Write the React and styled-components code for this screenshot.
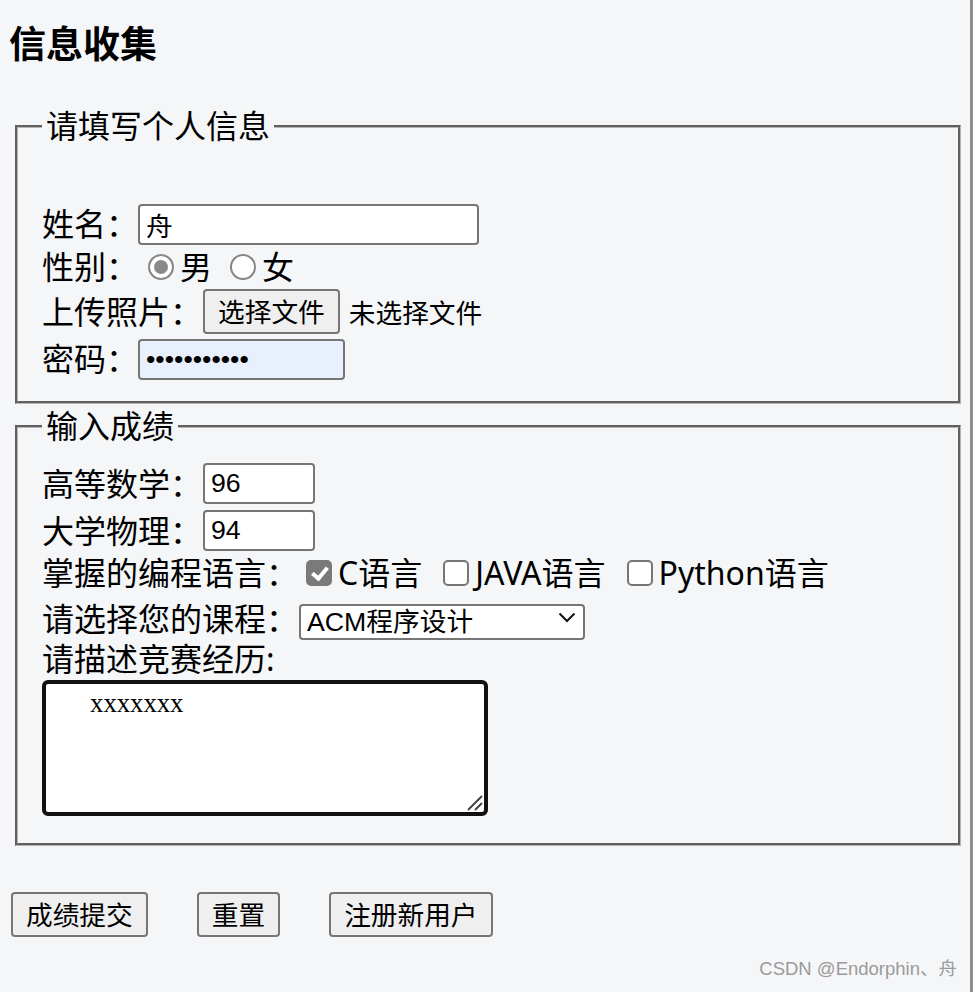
import React from 'react';
import styled, { createGlobalStyle } from 'styled-components';

const GlobalStyle = createGlobalStyle`
  html, body {
    margin: 0;
    padding: 0;
    background: #f5f6f8;
  }
  body {
    font-family: "Noto Sans", "Noto Sans CJK SC", sans-serif;
    color: #000;
  }
`;

const Page = styled.div`
  position: relative;
  box-sizing: border-box;
  min-height: 100vh;
  padding: 22px 9px 1px 10px;
  border-right: 3px solid #8c8c8c;
`;

const Title = styled.h3`
  margin: 0 0 0 -1px;
  font-size: 37px;
  line-height: 44px;
  font-weight: 700;
`;

const Group = styled.fieldset`
  margin: ${p => p.$top}px 0 0 5px;
  padding: 0 24px ${p => p.$bottom}px 24px;
  border: 3px groove #b4b4b4;
  min-width: 0;
`;

const Legend = styled.legend`
  padding: 0 4px;
  font-size: 32px;
  line-height: 40px;
`;

const Row = styled.div`
  display: flex;
  align-items: center;
  height: ${p => p.$h}px;
  margin-top: ${p => p.$mt || 0}px;
  font-size: 32px;
  line-height: 40px;
  white-space: nowrap;
`;

const Label = styled.span`
  margin-right: ${p => p.$gap || 0}px;
`;

const TextInput = styled.input`
  box-sizing: border-box;
  width: ${p => p.$w}px;
  height: 41px;
  margin: 0;
  padding: 0 6px;
  border: 2px solid #767676;
  border-radius: 4px;
  background: ${p => (p.$filled ? '#e8f0fe' : '#fff')};
  font: 26.7px "Liberation Sans", "Noto Sans CJK SC", sans-serif;
  color: #000;
  outline: none;
`;

const Choice = styled.label`
  display: inline-flex;
  align-items: center;
  margin-right: ${p => p.$gap || 0}px;
`;

const Radio = styled.input`
  appearance: none;
  box-sizing: border-box;
  width: 26px;
  height: 26px;
  margin: 0 6px 0 10px;
  border: 2px solid #858585;
  border-radius: 50%;
  background: #fff;

  &:checked {
    border-color: #8a8a8a;
    background: #8a8a8a;
    box-shadow: inset 0 0 0 4px #fff;
  }
`;

const Check = styled.input`
  appearance: none;
  position: relative;
  box-sizing: border-box;
  width: 26px;
  height: 26px;
  margin: 0 6px 0 8px;
  border: 2px solid #767676;
  border-radius: 5px;
  background: #fff;

  &:checked {
    border-color: #7a7a7a;
    background: #7a7a7a;
  }

  &:checked::after {
    content: '';
    position: absolute;
    left: 7px;
    top: 2px;
    width: 6px;
    height: 12px;
    border: solid #fff;
    border-width: 0 4px 4px 0;
    transform: rotate(40deg);
  }
`;

const Button = styled.button`
  box-sizing: border-box;
  height: 45px;
  margin: 0 ${p => p.$gap || 0}px 0 ${p => p.$left || 0}px;
  padding: 0 13px;
  border: 2px solid #767676;
  border-radius: 4px;
  background: #efefef;
  color: #000;
  font: 26.7px "Noto Sans CJK SC", sans-serif;
  line-height: 1;
`;

const FileNote = styled.span`
  margin-left: 9px;
  font: 26.7px "Noto Sans CJK SC", sans-serif;
`;

const SelectWrap = styled.span`
  position: relative;
  display: inline-block;
  margin-left: 1px;
`;

const Select = styled.select`
  box-sizing: border-box;
  appearance: none;
  width: 286px;
  height: 36px;
  margin: 0;
  padding: 0 0 0 6px;
  border: 2px solid #767676;
  border-radius: 4px;
  background: #fff;
  color: #000;
  font: 26.7px "Liberation Sans", "Noto Sans CJK SC", sans-serif;
  outline: none;
`;

const Chevron = styled.svg`
  position: absolute;
  right: 9px;
  top: 13px;
  pointer-events: none;
`;

const NotesWrap = styled.div`
  position: relative;
  width: 446px;
`;

const Notes = styled.textarea`
  display: block;
  box-sizing: border-box;
  width: 446px;
  height: 136px;
  margin: 0;
  padding: 4px;
  border: 4px solid #111;
  border-radius: 6px;
  background: #fff;
  color: #000;
  font: 26.7px "Liberation Serif", serif;
  outline: none;
  resize: none;
`;

const Grip = styled.svg`
  position: absolute;
  right: 5px;
  bottom: 5px;
  pointer-events: none;
`;

const Actions = styled.div`
  display: flex;
  margin-top: 46px;
  margin-left: 1px;
`;

const Watermark = styled.div`
  position: absolute;
  right: 13px;
  bottom: 12px;
  font: 18.5px/22px "Liberation Sans", "Noto Sans CJK SC", sans-serif;
  color: #9a9a9a;
`;

const languages = [
  { name: 'C语言', checked: true },
  { name: 'JAVA语言', checked: false },
  { name: 'Python语言', checked: false },
];

export default function App() {
  return (
    <Page>
      <GlobalStyle />
      <Title>信息收集</Title>

      <Group $top={40} $bottom={18}>
        <Legend>请填写个人信息</Legend>
        <Row $h={44} $mt={56}>
          <Label>姓名：</Label>
          <TextInput type="text" defaultValue="舟" $w={341} />
        </Row>
        <Row $h={42}>
          <Label>性别：</Label>
          <Choice $gap={8}>
            <Radio type="radio" name="sex" defaultChecked />男
          </Choice>
          <Choice>
            <Radio type="radio" name="sex" />女
          </Choice>
        </Row>
        <Row $h={47}>
          <Label>上传照片：</Label>
          <Button type="button" $left={1}>选择文件</Button>
          <FileNote>未选择文件</FileNote>
        </Row>
        <Row $h={48}>
          <Label>密码：</Label>
          <TextInput type="password" defaultValue="12345678901" $w={207} $filled />
        </Row>
      </Group>

      <Group $top={2} $bottom={27}>
        <Legend>输入成绩</Legend>
        <Row $h={41} $mt={17}>
          <Label $gap={1}>高等数学：</Label>
          <TextInput type="text" defaultValue="96" $w={112} />
        </Row>
        <Row $h={41} $mt={6}>
          <Label $gap={1}>大学物理：</Label>
          <TextInput type="text" defaultValue="94" $w={112} />
        </Row>
        <Row $h={42} $mt={1}>
          <Label>掌握的编程语言：</Label>
          {languages.map(lang => (
            <Choice key={lang.name} $gap={13}>
              <Check type="checkbox" defaultChecked={lang.checked} />
              {lang.name}
            </Choice>
          ))}
        </Row>
        <Row $h={36} $mt={7}>
          <Label>请选择您的课程：</Label>
          <SelectWrap>
            <Select defaultValue="acm">
              <option value="acm">ACM程序设计</option>
              <option value="web">Web前端开发</option>
              <option value="ds">数据结构</option>
            </Select>
            <Chevron width="18" height="11" viewBox="0 0 18 11">
              <polyline points="1.5,1.5 9,9 16.5,1.5" fill="none" stroke="#111" strokeWidth="2" />
            </Chevron>
          </SelectWrap>
        </Row>
        <Row $h={43}>
          <Label>请描述竞赛经历:</Label>
        </Row>
        <NotesWrap>
          <Notes defaultValue={'      xxxxxxx'} />
          <Grip width="18" height="18" viewBox="0 0 18 18">
            <path d="M17 3 L3 17 M17 10 L10 17" stroke="#444" strokeWidth="2" fill="none" />
          </Grip>
        </NotesWrap>
      </Group>

      <Actions>
        <Button type="submit" $gap={49}>成绩提交</Button>
        <Button type="reset" $gap={49}>重置</Button>
        <Button type="button">注册新用户</Button>
      </Actions>

      <Watermark>CSDN @Endorphin、舟</Watermark>
    </Page>
  );
}
